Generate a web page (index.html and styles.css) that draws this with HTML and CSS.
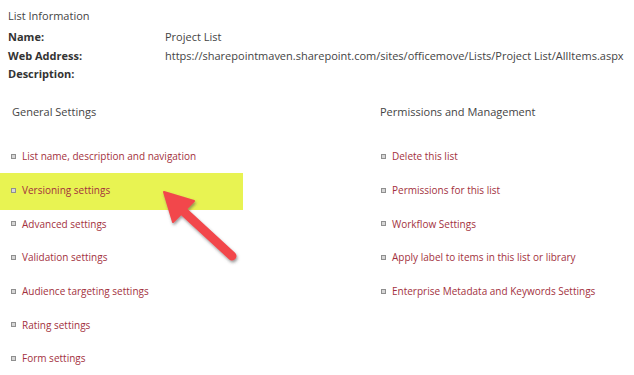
FILE: index.html
```html
<!DOCTYPE html>
<html>
<head>
<meta charset="utf-8">
<link rel="stylesheet" href="styles.css">
</head>
<body>
<div class="page">
  <div class="info">
    <div class="info-title">List Information</div>
    <div class="info-row"><span class="label">Name:</span><span class="value">Project List</span></div>
    <div class="info-row"><span class="label">Web Address:</span><span class="value">https://sharepointmaven.sharepoint.com/sites/officemove/Lists/Project List/AllItems.aspx</span></div>
    <div class="info-row"><span class="label">Description:</span><span class="value"></span></div>
  </div>
  <div class="columns">
    <div class="col col-left">
      <div class="col-head">General Settings</div>
      <ul class="links">
        <li><span class="bullet"></span><a>List name, description and navigation</a></li>
        <li class="highlight"><span class="bullet"></span><a>Versioning settings</a></li>
        <li><span class="bullet"></span><a>Advanced settings</a></li>
        <li><span class="bullet"></span><a>Validation settings</a></li>
        <li><span class="bullet"></span><a>Audience targeting settings</a></li>
        <li><span class="bullet"></span><a>Rating settings</a></li>
        <li><span class="bullet"></span><a>Form settings</a></li>
      </ul>
    </div>
    <div class="col col-right">
      <div class="col-head">Permissions and Management</div>
      <ul class="links">
        <li><span class="bullet"></span><a>Delete this list</a></li>
        <li><span class="bullet"></span><a>Permissions for this list</a></li>
        <li><span class="bullet"></span><a>Workflow Settings</a></li>
        <li><span class="bullet"></span><a>Apply label to items in this list or library</a></li>
        <li><span class="bullet"></span><a>Enterprise Metadata and Keywords Settings</a></li>
      </ul>
    </div>
  </div>
  <svg class="arrow" width="634" height="375" viewBox="0 0 634 375">
    <defs>
      <filter id="sh" x="-20%" y="-20%" width="140%" height="140%">
        <feDropShadow dx="1" dy="2" stdDeviation="1.5" flood-color="#555" flood-opacity="0.6"/>
      </filter>
    </defs>
    <g filter="url(#sh)" fill="#f2474b" stroke="#f2474b">
      <line x1="182" y1="210" x2="232" y2="256" stroke-width="9" stroke-linecap="round"/>
      <polygon points="164,192 194,201 173,222" stroke-width="2" stroke-linejoin="round"/>
    </g>
  </svg>
</div>
</body>
</html>
```
FILE: styles.css
```css
html, body {
  margin: 0;
  padding: 0;
  background: #ffffff;
}
.page {
  position: relative;
  width: 634px;
  height: 375px;
  overflow: hidden;
  font-family: "Open Sans", "Noto Sans", sans-serif;
  font-size: 10px;
  color: #333333;
}
.info {
  padding: 7px 0 0 8px;
  font-size: 11px;
}
.info-title {
  line-height: 18px;
  color: #444444;
  margin-bottom: 3px;
}
.info-row {
  display: flex;
  line-height: 18.5px;
  height: 18.5px;
  white-space: nowrap;
}
.label {
  width: 157px;
  font-weight: 700;
  color: #333333;
}
.value {
  color: #444444;
}
.columns {
  display: grid;
  grid-template-columns: 380px 1fr;
  margin-top: 19px;
}
.col-head {
  line-height: 18px;
  color: #444444;
  font-size: 11px;
}
.col-left .col-head {
  padding-left: 12px;
}
.links {
  list-style: none;
  margin: 19px 0 0 0;
  padding: 0;
}
.links li {
  display: flex;
  align-items: center;
  height: 33.7px;
  box-sizing: border-box;
  white-space: nowrap;
}
.col-left .links li {
  padding-left: 11px;
}
.col-right .links li {
  padding-left: 1px;
}
.links li.highlight {
  width: 243px;
  height: 37.2px;
  padding-bottom: 3.5px;
  margin-bottom: -3.5px;
  background: #e8f352;
}
.bullet {
  width: 3px;
  height: 3px;
  border: 1px solid #8f8f8f;
  background: #d6d6d6;
  margin-right: 6px;
  flex: none;
}
.links a {
  color: #a3313d;
  text-decoration: none;
}
.arrow {
  position: absolute;
  left: 0;
  top: 0;
  pointer-events: none;
}
```
